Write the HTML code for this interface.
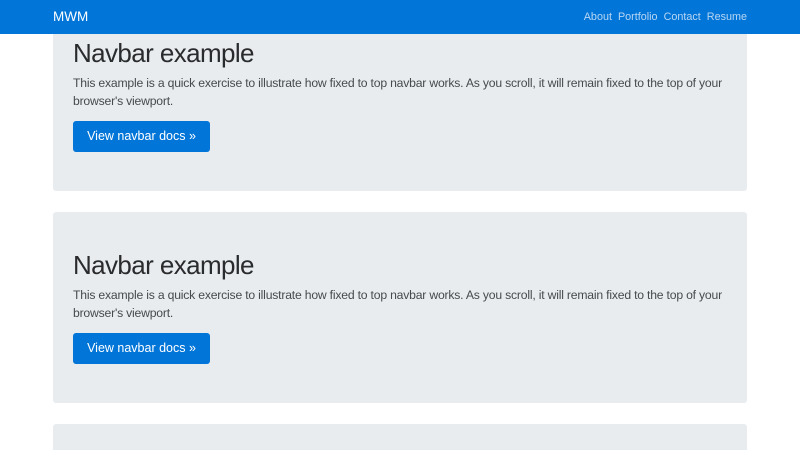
<!DOCTYPE html>
<html style="width:800px;height:450px;overflow:hidden"><head><style>
*{box-sizing:border-box;margin:0;padding:0}
body{width:800px;height:450px;overflow:hidden;background:#fff;font-family:"Liberation Sans",sans-serif;position:relative}
.nav{position:absolute;top:0;left:0;width:800px;height:34px;background:#0275d8;z-index:2}
.brand{position:absolute;left:53px;top:9px;color:#fff;font-size:13.5px}
.links{position:absolute;right:53px;top:11px;font-size:10.8px;color:#b8d6f2}
.links span{margin-left:6px}
.j{position:absolute;left:53px;width:694px;height:191px;background:#e9ecef;border-radius:3px}
.j h1{position:absolute;left:20px;top:38px;font-size:26px;font-weight:normal;color:#292b2c;letter-spacing:-0.6px}
.j p{position:absolute;left:20px;top:74px;width:665px;font-size:12.2px;line-height:18px;color:#464a4c;letter-spacing:-0.2px}
.j .b{position:absolute;left:20px;top:121px;width:137px;height:31px;background:#0275d8;border-radius:3px;color:#fff;font-size:12.5px;line-height:31px;text-align:center}
</style></head><body>
<div class="nav"><div class="brand">MWM</div><div class="links"><span>About</span><span>Portfolio</span><span>Contact</span><span>Resume</span></div></div>
<div class="j" style="top:0"><h1>Navbar example</h1><p>This example is a quick exercise to illustrate how fixed to top navbar works. As you scroll, it will remain fixed to the top of your browser's viewport.</p><div class="b">View navbar docs »</div></div>
<div class="j" style="top:212px"><h1>Navbar example</h1><p>This example is a quick exercise to illustrate how fixed to top navbar works. As you scroll, it will remain fixed to the top of your browser's viewport.</p><div class="b">View navbar docs »</div></div>
<div class="j" style="top:424px;height:26px;border-radius:3px 3px 0 0"></div>
</body></html>
